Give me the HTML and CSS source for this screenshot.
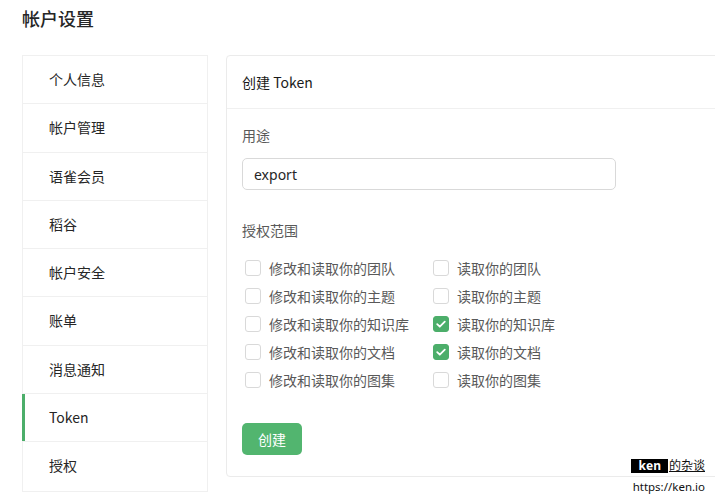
FILE: index.html
```html
<!DOCTYPE html>
<html lang="zh-CN">
<head>
  <meta charset="UTF-8" />
  <meta name="viewport" content="width=device-width, initial-scale=1.0"/>
  <title>帐户设置</title>
  <link rel="stylesheet" href="styles.css">
</head>
<body>

<div class="page">
  <h2 class="page-title">帐户设置</h2>

  <div class="layout">
    <!-- Side menu -->
    <ul class="side-menu">
      <li>个人信息</li>
      <li>帐户管理</li>
      <li>语雀会员</li>
      <li>稻谷</li>
      <li>帐户安全</li>
      <li>账单</li>
      <li>消息通知</li>
      <li class="active">Token</li>
      <li>授权</li>
    </ul>

    <!-- Token form -->
    <div class="card">
      <div class="card-head">创建 Token</div>
      <div class="card-body">
        <div class="field">
          <label class="field-label" for="usage">用途</label>
          <input class="text-input" type="text" id="usage" value="export">
        </div>

        <div class="field scope">
          <div class="field-label">授权范围</div>
          <div class="scope-grid">
            <label class="check"><span class="box"></span>修改和读取你的团队</label>
            <label class="check"><span class="box"></span>读取你的团队</label>
            <label class="check"><span class="box"></span>修改和读取你的主题</label>
            <label class="check"><span class="box"></span>读取你的主题</label>
            <label class="check"><span class="box"></span>修改和读取你的知识库</label>
            <label class="check"><span class="box checked"><svg viewBox="0 0 16 16" width="16" height="16"><path d="M4.2 8.2l2.6 2.5 5-5" fill="none" stroke="#fff" stroke-width="1.8" stroke-linecap="round" stroke-linejoin="round"/></svg></span>读取你的知识库</label>
            <label class="check"><span class="box"></span>修改和读取你的文档</label>
            <label class="check"><span class="box checked"><svg viewBox="0 0 16 16" width="16" height="16"><path d="M4.2 8.2l2.6 2.5 5-5" fill="none" stroke="#fff" stroke-width="1.8" stroke-linecap="round" stroke-linejoin="round"/></svg></span>读取你的文档</label>
            <label class="check"><span class="box"></span>修改和读取你的图集</label>
            <label class="check"><span class="box"></span>读取你的图集</label>
          </div>
        </div>

        <button class="btn">创建</button>
      </div>
    </div>
  </div>
</div>

<div class="stamp">
  <div class="stamp-name"><span class="stamp-tag">ken</span><span class="stamp-cn">的杂谈</span></div>
  <div class="stamp-url">https://ken.io</div>
</div>

</body>
</html>
```

FILE: styles.css
```css
body {
  margin: 0;
  font-family: "Noto Sans CJK SC", "Noto Sans", sans-serif;
  color: #262626;
  background: #fff;
  overflow: hidden;
}

.page {
  padding: 0 0 0 22px;
  width: 760px;
}

.page-title {
  margin: 0;
  height: 55px;
  line-height: 37px;
  font-size: 18px;
  font-weight: 500;
}

.layout {
  display: flex;
  align-items: flex-start;
  gap: 18px;
}

.side-menu {
  list-style: none;
  margin: 0;
  padding: 0;
  width: 186px;
  border: 1px solid #f0f0f0;
  box-sizing: border-box;
}

.side-menu li {
  height: 48.3px;
  line-height: 47px;
  padding-left: 26px;
  font-size: 14px;
  border-bottom: 1px solid #f0f0f0;
  box-sizing: border-box;
  position: relative;
}

.side-menu li:last-child {
  border-bottom: none;
}

.side-menu li.active::before {
  content: "";
  position: absolute;
  left: -1px;
  top: 0;
  bottom: 0;
  width: 3px;
  background: #4cae6a;
}

.card {
  width: 520px;
  border: 1px solid #ebebeb;
  border-radius: 4px;
}

.card-head {
  height: 52px;
  line-height: 53px;
  padding-left: 15px;
  font-size: 14px;
  font-weight: 400;
  color: #1a1a1a;
  border-bottom: 1px solid #f0f0f0;
}

.card-body {
  padding: 16px 15px 21px;
}

.field-label {
  display: block;
  font-size: 14px;
  color: #595959;
  line-height: 20px;
  margin-bottom: 13px;
}

.text-input {
  width: 374px;
  height: 32px;
  box-sizing: border-box;
  border: 1px solid #d9d9d9;
  border-radius: 5px;
  padding: 0 11px;
  font-family: "Noto Sans", sans-serif;
  font-size: 14px;
  color: #262626;
  outline: none;
}

.scope {
  margin-top: 30px;
}

.scope .field-label {
  margin-bottom: 18px;
}

.scope-grid {
  display: grid;
  grid-template-columns: 188px 180px;
  row-gap: 8px;
}

.check {
  display: flex;
  align-items: center;
  height: 20px;
  font-size: 14px;
  color: #595959;
  padding-left: 3px;
}

.box {
  width: 16px;
  height: 16px;
  box-sizing: border-box;
  border: 1px solid #d9d9d9;
  border-radius: 3px;
  margin-right: 8px;
  display: inline-flex;
}

.box.checked {
  background: #4cae6a;
  border-color: #4cae6a;
}

.box.checked svg {
  margin: -1px;
}

.btn {
  margin-top: 33px;
  height: 32px;
  width: 60px;
  border: none;
  border-radius: 5px;
  background: #52b56f;
  color: #fff;
  font-family: "Noto Sans CJK SC", sans-serif;
  font-size: 14px;
  cursor: pointer;
}

.stamp {
  position: absolute;
  right: 10px;
  bottom: 5px;
  font-family: "Noto Sans", "Noto Sans CJK SC", sans-serif;
  font-size: 12px;
  color: #111;
}

.stamp-name {
  display: flex;
  justify-content: flex-end;
  align-items: center;
  line-height: 14px;
  margin-bottom: 6px;
}

.stamp-tag {
  background: #000;
  color: #fff;
  font-weight: 700;
  padding: 0 7px 0 8px;
  margin-right: 1px;
}

.stamp-cn {
  text-decoration: underline;
}

.stamp-url {
  background: #fff;
  line-height: 16px;
  font-size: 11.5px;
  text-align: right;
}
```
